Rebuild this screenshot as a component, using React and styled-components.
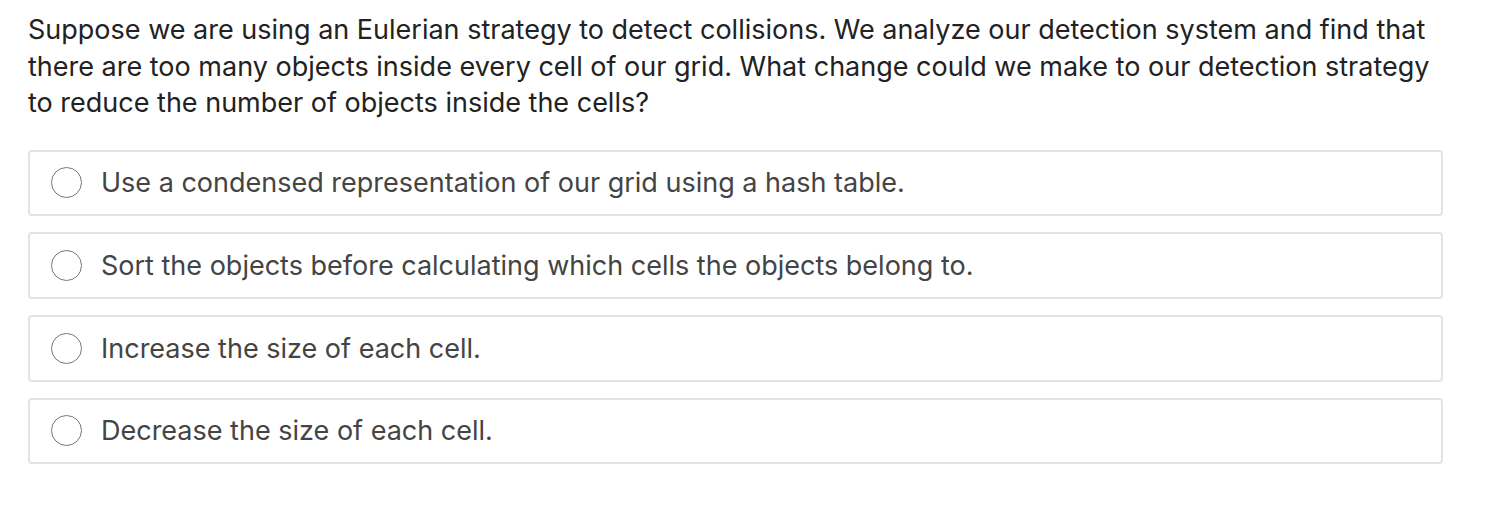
import React from 'react';
import styled, { createGlobalStyle } from 'styled-components';

const GlobalStyle = createGlobalStyle`
  body {
    margin: 0;
    background: #fff;
    font-family: Inter, "Noto Sans", sans-serif;
  }
`;

const Page = styled.div`
  width: 1415px;
  padding: 12px 0 0 28px;
`;

const Question = styled.p`
  margin: 0 0 28px;
  font-size: 27px;
  line-height: 36.5px;
  color: #222;
`;

const Options = styled.div`
  display: flex;
  flex-direction: column;
  gap: 16px;
`;

const Option = styled.label`
  display: flex;
  align-items: center;
  height: 66.7px;
  box-sizing: border-box;
  border: 2px solid #e3e3e3;
  border-radius: 4px;
  padding-left: 21px;
  cursor: pointer;
`;

const Radio = styled.span`
  width: 31px;
  height: 31px;
  box-sizing: border-box;
  border: 1.5px solid #777;
  border-radius: 50%;
  flex-shrink: 0;
  margin-right: 19px;
`;

const Text = styled.span`
  font-size: 27px;
  color: #444;
`;

const answers = [
  'Use a condensed representation of our grid using a hash table.',
  'Sort the objects before calculating which cells the objects belong to.',
  'Increase the size of each cell.',
  'Decrease the size of each cell.',
];

export default function App() {
  return (
    <Page>
      <GlobalStyle />
      <Question>
        Suppose we are using an Eulerian strategy to detect collisions. We analyze our detection system and find that
        there are too many objects inside every cell of our grid. What change could we make to our detection strategy
        to reduce the number of objects inside the cells?
      </Question>
      <Options>
        {answers.map((a) => (
          <Option key={a}>
            <Radio />
            <Text>{a}</Text>
          </Option>
        ))}
      </Options>
    </Page>
  );
}
